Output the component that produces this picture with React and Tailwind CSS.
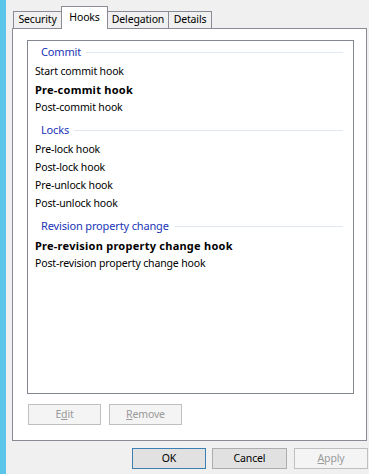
import React from 'react';

const font = { fontFamily: '"Noto Sans", "Open Sans", sans-serif', letterSpacing: '-0.15px' };

const groups = [
  {
    title: 'Commit',
    items: [
      { label: 'Start commit hook' },
      { label: 'Pre-commit hook', bold: true },
      { label: 'Post-commit hook' },
    ],
  },
  {
    title: 'Locks',
    items: [
      { label: 'Pre-lock hook' },
      { label: 'Post-lock hook' },
      { label: 'Pre-unlock hook' },
      { label: 'Post-unlock hook' },
    ],
  },
  {
    title: 'Revision property change',
    items: [
      { label: 'Pre-revision property change hook', bold: true },
      { label: 'Post-revision property change hook' },
    ],
  },
];

const Tab = ({ label, selected, className = '' }) => {
  if (selected) {
    return (
      <div
        className={`relative z-10 -mb-px flex h-[23px] items-start justify-center border border-b-0 border-[#898c95] bg-white pt-[3px] text-[10.5px] text-black ${className}`}
      >
        {label}
      </div>
    );
  }
  return (
    <div
      className={`flex h-[17px] items-center justify-center border border-b-0 border-[#898c95] bg-[#f0f0f0] text-[10.5px] text-black ${className}`}
    >
      {label}
    </div>
  );
};

const GroupHeader = ({ title, first }) => (
  <div className={`flex h-[22px] items-center pl-[13px] pr-[10px] ${first ? '' : 'mt-[2px]'}`}>
    <span className="text-[11px] text-[#2135b8]">{title}</span>
    <div className="ml-[5px] h-px flex-1 bg-[#e2e8ef]" />
  </div>
);

const DisabledButton = ({ children, className = '' }) => (
  <div
    className={`flex h-[21px] items-center justify-center border border-[#bfbfbf] bg-[#f4f4f4] text-[10.5px] text-[#9a9a9a] ${className}`}
  >
    {children}
  </div>
);

export default function App() {
  return (
    <div className="flex h-[474px] w-[369px] overflow-hidden bg-[#f0f0f0]" style={font}>
      <div className="w-[6px] shrink-0 bg-[#5bc6ea]" />
      <div className="flex flex-1 flex-col">
        {/* tab strip */}
        <div className="flex h-[28px] items-end pl-[7px]">
          <Tab label="Security" className="w-[49px]" />
          <Tab label="Hooks" selected className="-mx-px w-[47px]" />
          <Tab label="Delegation" className="w-[62px]" />
          <Tab label="Details" className="-ml-px w-[44px]" />
        </div>

        {/* tab page */}
        <div className="ml-[6px] flex h-[413px] w-[355px] flex-col border border-[#898c95] bg-white pl-[14px] pr-[12px] pt-[11px]">
          <div className="h-[354px] border border-[#828790] bg-white">
            {groups.map((g, gi) => (
              <div key={g.title}>
                <GroupHeader title={g.title} first={gi === 0} />
                {g.items.map((it) => (
                  <div
                    key={it.label}
                    className={`flex h-[18px] items-center pl-[7px] text-black ${
                      it.bold ? 'text-[11px] font-bold tracking-[0.25px]' : 'text-[10.5px]'
                    }`}
                  >
                    {it.label}
                  </div>
                ))}
              </div>
            ))}
          </div>
          <div className="mt-[10px] flex gap-[8px] pl-px">
            <DisabledButton className="w-[73px]">
              E<span className="underline">d</span>it
            </DisabledButton>
            <DisabledButton className="w-[73px]">
              <span className="underline">R</span>emove
            </DisabledButton>
          </div>
        </div>

        {/* dialog buttons */}
        <div className="mt-[7px] flex pl-[126px]">
          <div className="flex h-[21px] w-[74px] items-center justify-center border border-[#3c7fb1] bg-[#e1e1e1] text-[10.5px] text-black">
            OK
          </div>
          <div className="ml-[6px] flex h-[21px] w-[75px] items-center justify-center border border-[#adadad] bg-[#e1e1e1] text-[10.5px] text-black">
            Cancel
          </div>
          <div className="ml-[7px] flex h-[21px] w-[74px] items-center justify-center border border-[#bfbfbf] bg-[#f4f4f4] text-[10.5px] text-[#9a9a9a]">
            <span className="underline">A</span>pply
          </div>
        </div>
      </div>
    </div>
  );
}
